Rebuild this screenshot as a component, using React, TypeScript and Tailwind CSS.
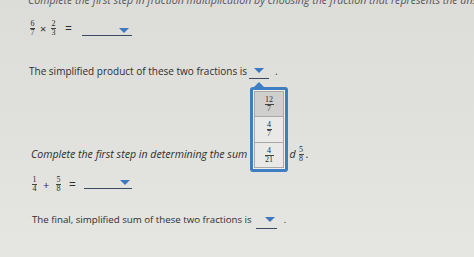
import React from "react";

function Frac({ n, d, className = "" }: { n: string; d: string; className?: string }) {
  return (
    <span
      className={
        "inline-flex flex-col items-center font-['Liberation_Serif',serif] text-[8px] leading-[8px] text-[#2a2a2a] " +
        className
      }
    >
      <span className="px-[0.5px]">{n}</span>
      <span className="h-px w-full bg-[#444]" />
      <span className="px-[0.5px]">{d}</span>
    </span>
  );
}

function Tri({ className = "" }: { className?: string }) {
  return (
    <svg width="10" height="5" viewBox="0 0 10 5" className={className}>
      <polygon points="0,0 10,0 5,5" fill="#3e78bd" />
    </svg>
  );
}

export default function App() {
  return (
    <div className="relative w-[474px] h-[257px] overflow-hidden bg-gradient-to-b from-[#dcdcd9] to-[#e5e5e2] font-['Open_Sans',sans-serif] text-[#2e2e2e]">
      {/* clipped instruction line */}
      <div className="-mt-[6px] pl-[28px] whitespace-nowrap italic text-[10.6px] leading-[12px] text-[#555]">
        Complete the first step in fraction multiplication by choosing the fraction that represents the unsimplified product.
      </div>

      {/* row 1 */}
      <div className="mt-[15px] flex h-[15px] items-center pl-[30px]">
        <Frac n="6" d="7" />
        <span className="ml-[5px] w-[6px] text-center text-[11px] leading-[12px]">×</span>
        <Frac n="2" d="3" className="ml-[5px]" />
        <span className="ml-[9px] w-[7px] text-center text-[12px] leading-[12px]">=</span>
        <span className="ml-[10px] flex h-[15px] w-[50px] items-end justify-end self-start border-b border-[#3a4a63] pb-[2px] pr-[3px]">
          <Tri />
        </span>
      </div>

      {/* row 2 */}
      <div className="mt-[29px] flex items-start pl-[29px] text-[10px] leading-[12px] whitespace-nowrap">
        <span>The simplified product of these two fractions is</span>
        <span className="ml-[2px] flex h-[14px] w-[20px] items-end justify-center border-b border-[#3a4a63] pb-[5px]">
          <Tri />
        </span>
        <span className="ml-[6px]">.</span>
      </div>

      {/* row 3 */}
      <div className="mt-[67px] flex h-[16px] items-center pl-[31px] italic text-[10.6px] leading-[12px] whitespace-nowrap">
        <span>Complete the first step in determining the sum of</span>
        <Frac n="1" d="4" className="ml-[5px] mr-[6px] not-italic" />
        <span className="tracking-[-2px]">an</span>
        <span className="ml-[6px]">d</span>
        <Frac n="5" d="8" className="ml-[3px] not-italic" />
        <span className="ml-[2px] not-italic">.</span>
      </div>

      {/* row 4 */}
      <div className="mt-[15px] flex h-[15px] items-center pl-[32px]">
        <Frac n="1" d="4" />
        <span className="ml-[6px] w-[6px] text-center text-[11px] leading-[12px]">+</span>
        <Frac n="5" d="8" className="ml-[7px]" />
        <span className="ml-[8px] w-[7px] text-center text-[12px] leading-[12px]">=</span>
        <span className="ml-[8px] flex h-[12px] w-[48px] items-end justify-end self-start border-b border-[#3a4a63] pb-[3px] pr-[2px]">
          <Tri />
        </span>
      </div>

      {/* row 5 */}
      <div className="mt-[22px] flex items-start pl-[32px] text-[9.7px] leading-[12px] whitespace-nowrap">
        <span>The final, simplified sum of these two fractions is</span>
        <span className="ml-[4px] flex h-[15px] w-[21px] items-end justify-end border-b border-[#3a4a63] pb-[6px] pr-[2px]">
          <Tri />
        </span>
        <span className="ml-[7px]">.</span>
      </div>

      {/* open dropdown list */}
      <div className="absolute left-[250px] top-[87px] w-[38px] h-[85px]">
        <svg width="12" height="6" viewBox="0 0 12 6" className="absolute left-[3px] -top-[5px]">
          <polygon points="0,6 6,0 12,6" fill="#3f7ec2" />
        </svg>
        <div className="flex h-full w-full flex-col rounded-[3px] border-[3px] border-[#3f7ec2] bg-[#eeeeec] p-px">
          <div className="flex h-[26px] items-center justify-center border border-[#a9a9a7] bg-[#cfcfcd]">
            <Frac n="12" d="7" />
          </div>
          <div className="flex h-[26px] items-center justify-center border border-t-0 border-[#a9a9a7] bg-[#e9e9e7]">
            <Frac n="4" d="7" />
          </div>
          <div className="flex h-[25px] items-center justify-center border border-t-0 border-[#a9a9a7] bg-[#e9e9e7]">
            <Frac n="4" d="21" />
          </div>
        </div>
      </div>
    </div>
  );
}
